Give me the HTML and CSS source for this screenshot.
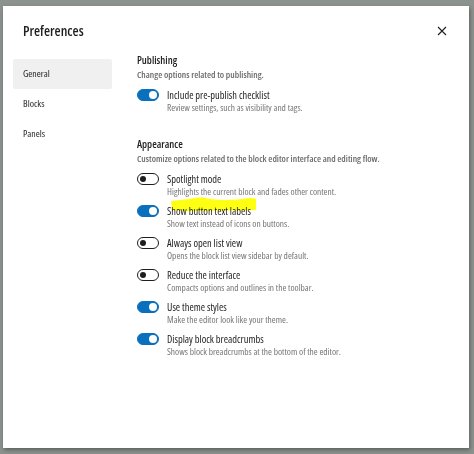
FILE: index.html
```html
<!DOCTYPE html>
<html>
<head>
<meta charset="utf-8">
<link rel="stylesheet" href="styles.css">
</head>
<body>
<div class="modal">
  <div class="header">
    <h1 class="title">Preferences</h1>
    <button class="close" aria-label="Close">
      <svg width="10" height="10" viewBox="0 0 10 10"><path d="M1 1 L9 9 M9 1 L1 9" stroke="#1e1e1e" stroke-width="1.1" fill="none"/></svg>
    </button>
  </div>
  <div class="body">
    <nav class="sidebar">
      <div class="tab active">General</div>
      <div class="tab">Blocks</div>
      <div class="tab">Panels</div>
    </nav>
    <div class="content">
      <section class="section">
        <h2 class="sec-title">Publishing</h2>
        <p class="sec-desc">Change options related to publishing.</p>
        <div class="options">
          <div class="option">
            <span class="toggle on"></span>
            <div class="opt-text">
              <div class="opt-label">Include pre-publish checklist</div>
              <div class="opt-help">Review settings, such as visibility and tags.</div>
            </div>
          </div>
        </div>
      </section>
      <section class="section appearance">
        <h2 class="sec-title">Appearance</h2>
        <p class="sec-desc">Customize options related to the block editor interface and editing flow.</p>
        <div class="options">
          <div class="option">
            <span class="toggle"></span>
            <div class="opt-text">
              <div class="opt-label">Spotlight mode</div>
              <div class="opt-help">Highlights the current block and fades other content.</div>
            </div>
          </div>
          <div class="option marked">
            <svg class="marker" width="86" height="16" viewBox="0 0 86 16"><path d="M0 4 C6 3 12 3 18 2 C24 1 28 0 34 1 C40 2 46 3 54 3 C62 3 70 2 78 1 C81 1 84 1 85 2 L85 13 C70 14 50 13 30 14 C20 14 10 14 1 13 Z" fill="#ffff14"/></svg>
            <span class="toggle on"></span>
            <div class="opt-text">
              <div class="opt-label">Show button text labels</div>
              <div class="opt-help">Show text instead of icons on buttons.</div>
            </div>
          </div>
          <div class="option">
            <span class="toggle"></span>
            <div class="opt-text">
              <div class="opt-label">Always open list view</div>
              <div class="opt-help">Opens the block list view sidebar by default.</div>
            </div>
          </div>
          <div class="option">
            <span class="toggle"></span>
            <div class="opt-text">
              <div class="opt-label">Reduce the interface</div>
              <div class="opt-help">Compacts options and outlines in the toolbar.</div>
            </div>
          </div>
          <div class="option">
            <span class="toggle on"></span>
            <div class="opt-text">
              <div class="opt-label">Use theme styles</div>
              <div class="opt-help">Make the editor look like your theme.</div>
            </div>
          </div>
          <div class="option">
            <span class="toggle on"></span>
            <div class="opt-text">
              <div class="opt-label">Display block breadcrumbs</div>
              <div class="opt-help">Shows block breadcrumbs at the bottom of the editor.</div>
            </div>
          </div>
        </div>
      </section>
    </div>
  </div>
</div>
</body>
</html>
```
FILE: styles.css
```css
* { box-sizing: border-box; }
html, body { margin: 0; padding: 0; }
body {
  width: 474px;
  height: 454px;
  overflow: hidden;
  background: #8c938f;
  font-family: "Open Sans", "Noto Sans", sans-serif;
  font-stretch: 87.5%;
  color: #1e1e1e;
  padding: 6px 0 0 3px;
}
.modal {
  width: 466px;
  height: 442px;
  background: #fff;
  box-shadow: 1px 2px 4px rgba(0,0,0,0.35);
  display: flex;
  flex-direction: column;
}
.header {
  display: flex;
  justify-content: space-between;
  align-items: flex-start;
  padding: 16px 22px 0 20px;
  height: 44px;
}
.title {
  margin: 0;
  font-size: 14px;
  font-weight: 600;
  line-height: 18px;
}
.close {
  border: 0;
  background: none;
  padding: 0;
  margin-top: 4px;
  width: 10px;
  height: 10px;
  display: flex;
}
.body {
  display: flex;
  flex: 1;
}
.sidebar {
  width: 109px;
  padding: 9px 0 0 10px;
  display: flex;
  flex-direction: column;
}
.tab {
  height: 30px;
  line-height: 30px;
  padding-left: 10px;
  font-size: 9.8px;
  border-radius: 2px;
}
.tab.active { background: #f0f0f0; }
.content {
  padding: 3px 0 0 25px;
  flex: 1;
}
.section { display: flex; flex-direction: column; }
.appearance { margin-top: 23px; }
.sec-title {
  margin: 0;
  font-size: 10.5px;
  font-weight: 600;
  line-height: 14px;
}
.sec-desc {
  margin: 2px 0 0;
  font-size: 9.3px;
  line-height: 12px;
  color: #6a6a6a;
  font-weight: 600;
}
.options {
  display: flex;
  flex-direction: column;
  gap: 6px;
  margin-top: 7px;
}
.option {
  display: flex;
  gap: 8px;
  align-items: flex-start;
  position: relative;
}
.toggle {
  width: 22px;
  height: 12px;
  margin-top: 1px;
  border-radius: 6px;
  border: 1px solid #1e1e1e;
  background: #fff;
  position: relative;
  flex: none;
}
.toggle::after {
  content: "";
  position: absolute;
  top: 2px;
  left: 2px;
  width: 6px;
  height: 6px;
  border-radius: 50%;
  background: #1e1e1e;
}
.toggle.on {
  background: #0a6fbd;
  border-color: #0a6fbd;
}
.toggle.on::after {
  left: auto;
  right: 1px;
  top: 1px;
  width: 8px;
  height: 8px;
  background: #fff;
}
.opt-text { display: flex; flex-direction: column; }
.opt-label {
  font-size: 10.4px;
  line-height: 14px;
}
.opt-help {
  font-size: 9.4px;
  line-height: 12px;
  color: #757575;
}
.marker {
  position: absolute;
  left: 34px;
  top: -7px;
  mix-blend-mode: multiply;
  pointer-events: none;
}
```
